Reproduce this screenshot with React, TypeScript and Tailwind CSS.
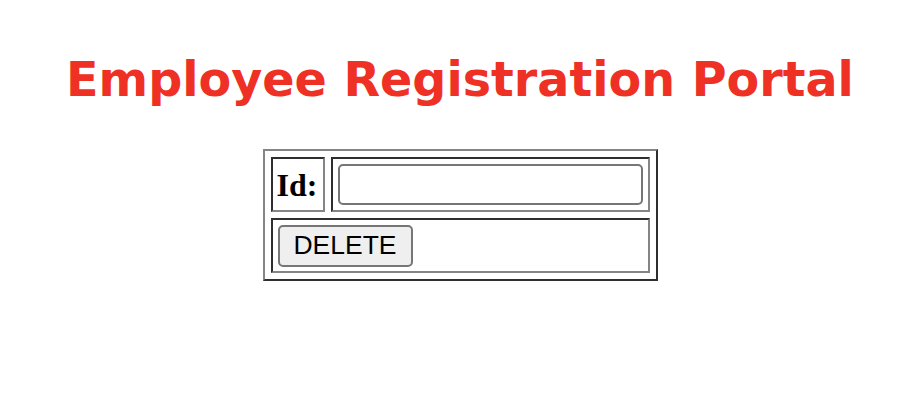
export default function App() {
  return (
    <div className="min-h-[400px] bg-white pt-[52px]">
      <h1 className="text-center font-['DejaVu_Sans',Verdana,sans-serif] text-[47.6px] font-bold leading-[56px] text-[#ee3124]">
        Employee Registration Portal
      </h1>
      <table className="mx-auto mt-[41px] border-separate border-spacing-[6px] border-2 border-t-[#858585] border-l-[#858585] border-b-[#2e2e2e] border-r-[#2e2e2e]">
        <tbody>
          <tr>
            <td className="h-[55px] w-[54px] border-2 border-t-[#2e2e2e] border-l-[#2e2e2e] border-b-[#858585] border-r-[#858585] px-[4px] font-['Liberation_Serif',serif] text-[32px] font-bold leading-none text-black">
              Id:
            </td>
            <td className="w-[318px] border-2 border-t-[#2e2e2e] border-l-[#2e2e2e] border-b-[#858585] border-r-[#858585] px-[5px]">
              <input
                type="text"
                className="block h-[41px] w-[305px] rounded-[5px] border-2 border-[#767676] bg-white px-1 outline-none"
              />
            </td>
          </tr>
          <tr>
            <td
              colSpan={2}
              className="h-[55px] border-2 border-t-[#2e2e2e] border-l-[#2e2e2e] border-b-[#858585] border-r-[#858585] px-[5px]"
            >
              <button className="block h-[42px] w-[135px] rounded-[5px] border-2 border-[#767676] bg-[#efefef] font-['Liberation_Sans',Arial,sans-serif] text-[26.5px] leading-none text-black">
                DELETE
              </button>
            </td>
          </tr>
        </tbody>
      </table>
    </div>
  );
}
